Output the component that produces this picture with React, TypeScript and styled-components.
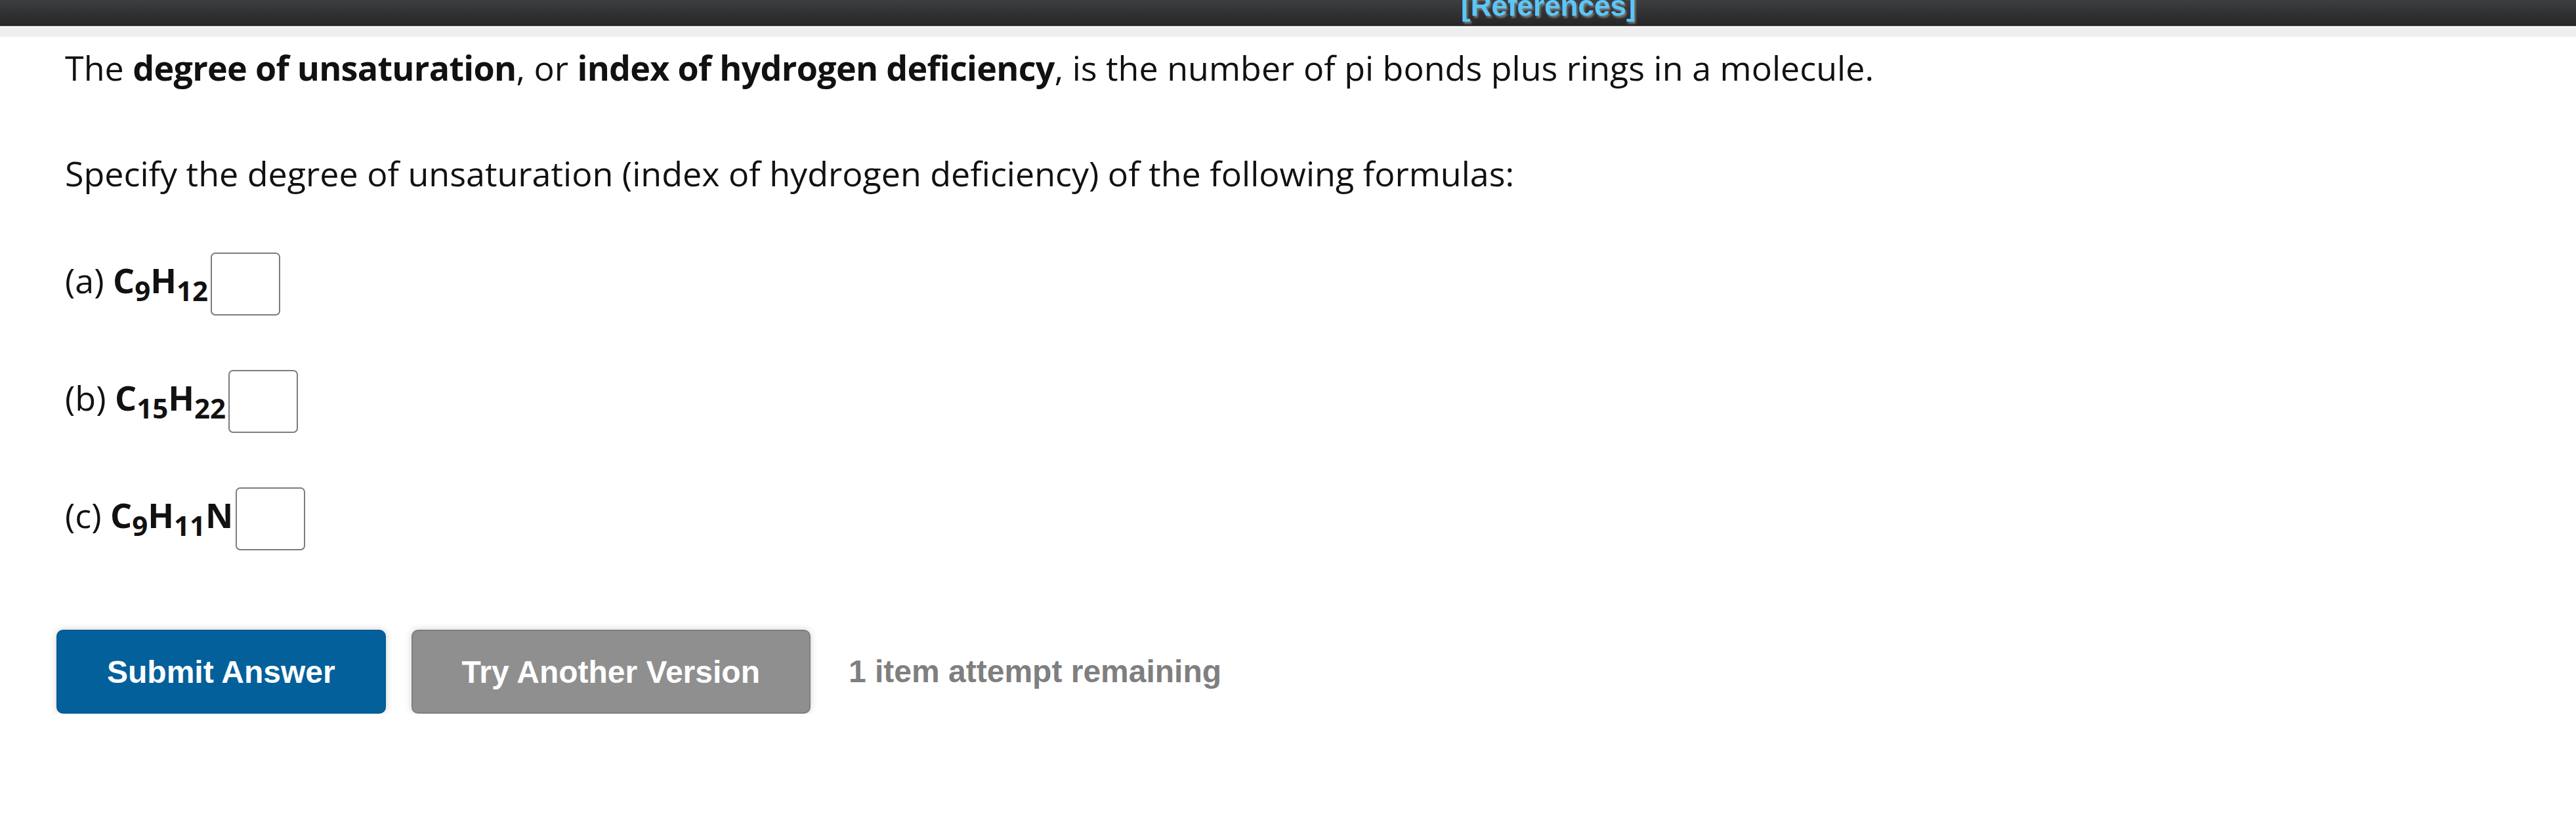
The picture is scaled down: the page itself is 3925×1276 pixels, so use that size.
import styled, { createGlobalStyle } from 'styled-components'

const GlobalStyle = createGlobalStyle`
  html, body {
    margin: 0;
    padding: 0;
    background: #fff;
  }
  body {
    font-family: 'Open Sans', 'Liberation Sans', sans-serif;
    color: #111;
  }
`

const TopBar = styled.div`
  height: 39px;
  overflow: hidden;
  display: flex;
  padding-left: 2226px;
  background: linear-gradient(#3d3e40, #262627);
  border-bottom: 1px solid #5c5d5c;

  a {
    display: block;
    margin-top: -13px;
    font-family: 'Liberation Sans', Arial, sans-serif;
    font-weight: 700;
    font-size: 44px;
    line-height: 44px;
    color: #5cc6f7;
    text-decoration: none;
    text-shadow: 2px 3px 3px #7a7a7a;
  }
`

const SubBar = styled.div`
  height: 14px;
  background: #efefef;
  border-top: 2px solid #fafafa;
`

const Content = styled.div`
  padding: 11px 0 0 99px;
  font-size: 52px;
  line-height: 72px;
`

const Para = styled.p<{ $gap: number }>`
  margin: ${p => p.$gap}px 0 0;

  b {
    font-weight: 700;
    letter-spacing: -0.7px;
  }
`

const Row = styled.div<{ $gap: number }>`
  margin-top: ${p => p.$gap}px;
  white-space: nowrap;

  b {
    font-weight: 700;
  }

  sub {
    font-size: 42px;
    line-height: 0;
    vertical-align: -12px;
  }
`

const AnswerBox = styled.input`
  box-sizing: border-box;
  width: 106px;
  height: 96px;
  margin: 0 0 0 4px;
  padding: 0;
  border: 2.5px solid #7c7c7c;
  border-radius: 7px;
  background: #fff;
  vertical-align: middle;
  outline: none;
`

const Actions = styled.div`
  display: flex;
  align-items: center;
  margin: 121px 0 0 -13px;
`

const Button = styled.button<{ $kind: 'primary' | 'muted' }>`
  box-sizing: border-box;
  height: 128px;
  padding: 0 75px;
  margin-right: 39px;
  border: 2px solid ${p => (p.$kind === 'primary' ? '#035c94' : '#7e7e7e')};
  border-radius: 10px;
  background: ${p => (p.$kind === 'primary' ? '#04609b' : '#8f8f8f')};
  color: #fff;
  font-family: 'Liberation Sans', Arial, sans-serif;
  font-weight: 700;
  font-size: 48px;
  box-shadow: 0 0 12px rgba(0, 0, 0, 0.18);
  cursor: pointer;
`

const Remaining = styled.span`
  margin-left: 19px;
  font-family: 'Liberation Sans', Arial, sans-serif;
  font-weight: 700;
  font-size: 48px;
  color: #7f7f7f;
`

const formulas = [
  { label: '(a)', parts: [['C', '9'], ['H', '12']] },
  { label: '(b)', parts: [['C', '15'], ['H', '22']] },
  { label: '(c)', parts: [['C', '9'], ['H', '11'], ['N', '']] },
]

export default function App() {
  return (
    <>
      <GlobalStyle />
      <TopBar>
        <a href="#">[References]</a>
      </TopBar>
      <SubBar />
      <Content>
        <Para $gap={0}>
          The <b>degree of unsaturation</b>, or <b>index of hydrogen deficiency</b>, is the
          number of pi bonds plus rings in a molecule.
        </Para>
        <Para $gap={89}>
          Specify the degree of unsaturation (index of hydrogen deficiency) of the following
          formulas:
        </Para>
        {formulas.map((f, i) => (
          <Row key={f.label} $gap={i === 0 ? 85 : 83}>
            {f.label}{' '}
            <b>
              {f.parts.map(([el, n]) => (
                <span key={el}>
                  {el}
                  {n && <sub>{n}</sub>}
                </span>
              ))}
            </b>
            <AnswerBox type="text" aria-label={`answer ${f.label}`} />
          </Row>
        ))}
        <Actions>
          <Button $kind="primary">Submit Answer</Button>
          <Button $kind="muted">Try Another Version</Button>
          <Remaining>1 item attempt remaining</Remaining>
        </Actions>
      </Content>
    </>
  )
}
